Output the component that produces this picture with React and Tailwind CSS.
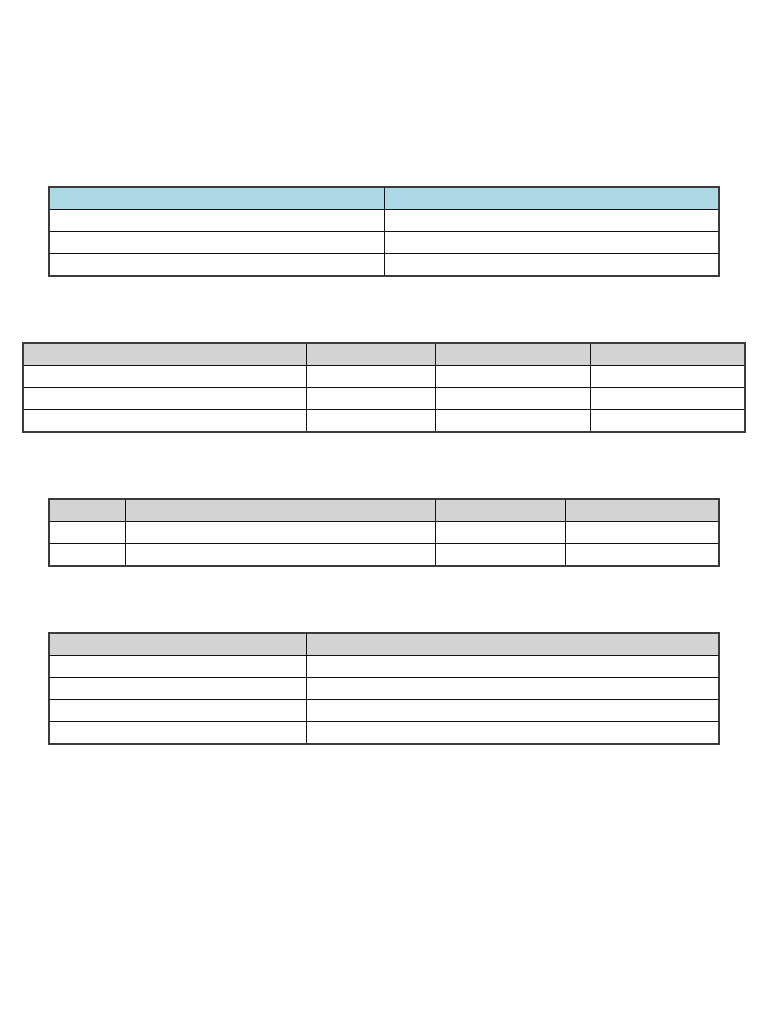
import React from "react";

const tables = [
  {
    width: "w-[672px]",
    cols: "grid-cols-[334px_1fr]",
    head: "bg-[#add8e6]",
    count: 2,
    rows: 3,
  },
  {
    width: "w-[724px]",
    cols: "grid-cols-[282px_128px_154px_1fr]",
    head: "bg-[#d3d3d3]",
    count: 4,
    rows: 3,
  },
  {
    width: "w-[672px]",
    cols: "grid-cols-[75px_309px_129px_1fr]",
    head: "bg-[#d3d3d3]",
    count: 4,
    rows: 2,
  },
  {
    width: "w-[672px]",
    cols: "grid-cols-[256px_1fr]",
    head: "bg-[#d3d3d3]",
    count: 2,
    rows: 4,
  },
];

const EmptyTable = ({ width, cols, head, count, rows }) => {
  const cells = [];
  for (let r = 0; r <= rows; r++) {
    for (let c = 0; c < count; c++) {
      cells.push(
        <div
          key={`${r}-${c}`}
          className={`h-[21px] ${r === 0 ? head : "bg-white"}`}
        />
      );
    }
  }
  return (
    <div
      className={`${width} mx-auto border-2 border-[#3a3a3a] bg-[#111] grid ${cols} gap-px`}
    >
      {cells}
    </div>
  );
};

export default function App() {
  return (
    <div
      className="w-[768px] h-[1024px] bg-white pt-[186px] flex flex-col gap-[65px]"
      style={{ fontFamily: "'Liberation Sans', Arial, sans-serif" }}
    >
      {tables.map((t, i) => (
        <EmptyTable key={i} {...t} />
      ))}
    </div>
  );
}
